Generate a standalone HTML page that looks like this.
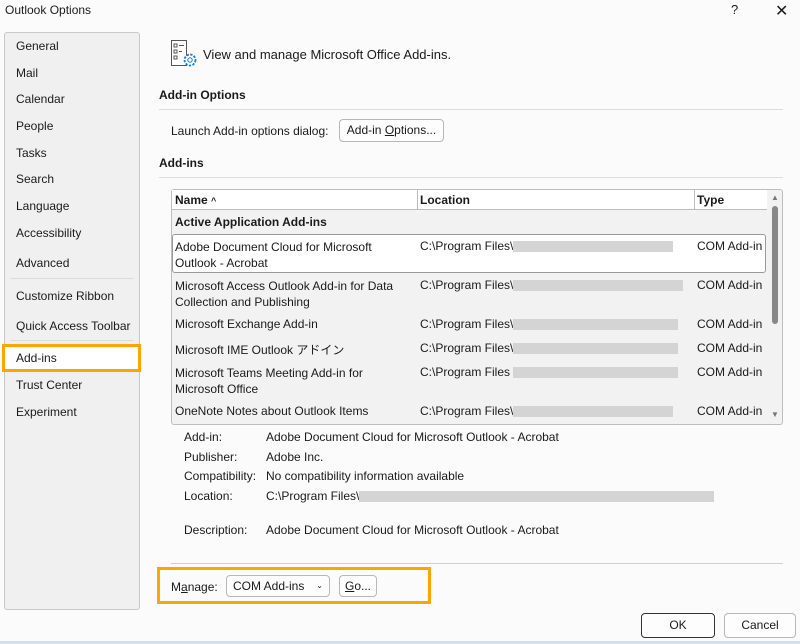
<!DOCTYPE html>
<html><head><meta charset="utf-8"><style>
*{margin:0;padding:0;box-sizing:border-box}
body{width:800px;height:644px;background:#fbfbfb;font-family:"Liberation Sans","Noto Sans CJK JP",sans-serif;font-size:12px;color:#1a1a1a;position:relative;overflow:hidden}
.a{position:absolute;white-space:nowrap}
.b{font-weight:bold}
.nav{left:4px;top:32px;width:136px;height:578px;background:#f0f0f0;border:1px solid #c8c8c8;border-radius:3px}
.blur{display:inline-block;height:11px;background:#d4d4d4;vertical-align:middle}
.btn{border:1px solid #b8b8b8;border-radius:4px;background:#fdfdfd;text-align:center}
.hr{height:1px;background:#dcdcdc}
</style></head><body>
<div class="a" style="left:5px;top:3px">Outlook Options</div>
<div class="a" style="left:731px;top:2px;font-size:13px">?</div>
<div class="a" style="left:775px;top:1px;font-size:16px;font-weight:300">✕</div>

<div class="a nav"></div>
<div class="a" style="left:16px;top:39px">General</div>
<div class="a" style="left:16px;top:66px">Mail</div>
<div class="a" style="left:16px;top:92px">Calendar</div>
<div class="a" style="left:16px;top:119px">People</div>
<div class="a" style="left:16px;top:146px">Tasks</div>
<div class="a" style="left:16px;top:172px">Search</div>
<div class="a" style="left:16px;top:199px">Language</div>
<div class="a" style="left:16px;top:226px">Accessibility</div>
<div class="a" style="left:16px;top:256px">Advanced</div>
<div class="a hr" style="left:10px;top:278px;width:124px"></div>
<div class="a" style="left:16px;top:289px">Customize Ribbon</div>
<div class="a" style="left:16px;top:319px">Quick Access Toolbar</div>
<div class="a hr" style="left:10px;top:340px;width:124px"></div>
<div class="a" style="left:2px;top:344px;width:139px;height:28px;border:3px solid #ffa500;background:#fff"></div>
<div class="a" style="left:16px;top:351px">Add-ins</div>
<div class="a" style="left:16px;top:378px">Trust Center</div>
<div class="a" style="left:16px;top:405px">Experiment</div>

<svg class="a" style="left:170px;top:38px" width="32" height="32" viewBox="0 0 32 32"><rect x="1.5" y="2.5" width="15" height="25" fill="#fff" stroke="#555"/><rect x="4" y="6" width="3" height="3" fill="none" stroke="#555"/><line x1="9" y1="7.5" x2="14" y2="7.5" stroke="#555"/><rect x="4" y="12" width="3" height="3" fill="none" stroke="#555"/><line x1="9" y1="13.5" x2="12" y2="13.5" stroke="#555"/><rect x="4" y="18" width="3" height="3" fill="none" stroke="#555"/><circle cx="20" cy="22" r="5.5" fill="#fff" stroke="#1b7bd3" stroke-width="1.8" stroke-dasharray="2.4 1.3"/><circle cx="20" cy="22" r="2.2" fill="none" stroke="#1b7bd3"/></svg>
<div class="a" style="left:203px;top:47px;font-size:13px">View and manage Microsoft Office Add-ins.</div>

<div class="a b" style="left:159px;top:88px">Add-in Options</div>
<div class="a hr" style="left:159px;top:109px;width:624px"></div>
<div class="a" style="left:171px;top:124px">Launch Add-in options dialog:</div>
<div class="a btn" style="left:339px;top:119px;width:105px;height:23px;line-height:21px">Add-in <u>O</u>ptions...</div>
<div class="a b" style="left:159px;top:156px">Add-ins</div>
<div class="a hr" style="left:159px;top:177px;width:624px"></div>

<div class="a" style="left:171px;top:189px;width:612px;height:236px;background:#f2f2f2;border:1px solid #bdbdbd;border-radius:3px"></div>
<div class="a" style="left:172px;top:190px;width:595px;height:20px;background:#fff;border-bottom:1px solid #bdbdbd"></div>
<div class="a" style="left:417px;top:190px;width:1px;height:20px;background:#bdbdbd"></div>
<div class="a" style="left:694px;top:190px;width:1px;height:20px;background:#bdbdbd"></div>
<div class="a b" style="left:175px;top:193px">Name <span style="font-size:9px">^</span></div>
<div class="a b" style="left:420px;top:193px">Location</div>
<div class="a b" style="left:697px;top:193px">Type</div>
<div class="a" style="left:771px;top:193px;font-size:8px;color:#777">▲</div>
<div class="a" style="left:772px;top:206px;width:6px;height:118px;background:#888;border-radius:3px"></div>
<div class="a" style="left:771px;top:410px;font-size:8px;color:#777">▼</div>
<div class="a b" style="left:175px;top:215px">Active Application Add-ins</div>
<div class="a" style="left:172px;top:234px;width:594px;height:39px;background:#fff;border:1px solid #999;border-radius:3px"></div>
<div class="a" style="left:175px;top:239px;line-height:16px">Adobe Document Cloud for Microsoft<br>Outlook - Acrobat</div>
<div class="a" style="left:175px;top:278px;line-height:16px">Microsoft Access Outlook Add-in for Data<br>Collection and Publishing</div>
<div class="a" style="left:175px;top:317px">Microsoft Exchange Add-in</div>
<div class="a" style="left:175px;top:341px">Microsoft IME Outlook アドイン</div>
<div class="a" style="left:175px;top:365px;line-height:16px">Microsoft Teams Meeting Add-in for<br>Microsoft Office</div>
<div class="a" style="left:175px;top:404px">OneNote Notes about Outlook Items</div>
<div class="a" style="left:420px;top:239px">C:\Program Files\<span class="blur" style="width:160px"></span></div>
<div class="a" style="left:420px;top:278px">C:\Program Files\<span class="blur" style="width:170px"></span></div>
<div class="a" style="left:420px;top:317px">C:\Program Files\<span class="blur" style="width:165px"></span></div>
<div class="a" style="left:420px;top:341px">C:\Program Files\<span class="blur" style="width:165px"></span></div>
<div class="a" style="left:420px;top:365px">C:\Program Files <span class="blur" style="width:165px"></span></div>
<div class="a" style="left:420px;top:404px">C:\Program Files\<span class="blur" style="width:160px"></span></div>
<div class="a" style="left:697px;top:239px">COM Add-in</div>
<div class="a" style="left:697px;top:278px">COM Add-in</div>
<div class="a" style="left:697px;top:317px">COM Add-in</div>
<div class="a" style="left:697px;top:341px">COM Add-in</div>
<div class="a" style="left:697px;top:365px">COM Add-in</div>
<div class="a" style="left:697px;top:404px">COM Add-in</div>

<div class="a" style="left:184px;top:430px">Add-in:</div>
<div class="a" style="left:184px;top:450px">Publisher:</div>
<div class="a" style="left:184px;top:469px">Compatibility:</div>
<div class="a" style="left:184px;top:489px">Location:</div>
<div class="a" style="left:184px;top:523px">Description:</div>
<div class="a" style="left:266px;top:430px">Adobe Document Cloud for Microsoft Outlook - Acrobat</div>
<div class="a" style="left:266px;top:450px">Adobe Inc.</div>
<div class="a" style="left:266px;top:469px">No compatibility information available</div>
<div class="a" style="left:266px;top:489px">C:\Program Files\<span class="blur" style="width:355px"></span></div>
<div class="a" style="left:266px;top:523px">Adobe Document Cloud for Microsoft Outlook - Acrobat</div>

<div class="a hr" style="left:171px;top:563px;width:612px;background:#d0d0d0"></div>
<div class="a" style="left:157px;top:567px;width:274px;height:37px;border:3px solid #ffa500"></div>
<div class="a" style="left:171px;top:580px">M<u>a</u>nage:</div>
<div class="a btn" style="left:226px;top:575px;width:104px;height:22px;line-height:20px;text-align:left;padding-left:6px">COM Add-ins<span style="position:absolute;right:6px;font-size:8px">⌄</span></div>
<div class="a btn" style="left:339px;top:575px;width:38px;height:22px;line-height:20px"><u>G</u>o...</div>

<div class="a btn" style="left:641px;top:613px;width:74px;height:25px;line-height:23px;border:1px solid #333">OK</div>
<div class="a btn" style="left:724px;top:613px;width:72px;height:25px;line-height:23px">Cancel</div>
<div class="a" style="left:0;top:641px;width:800px;height:3px;background:#cfe0ee"></div>
</body></html>
